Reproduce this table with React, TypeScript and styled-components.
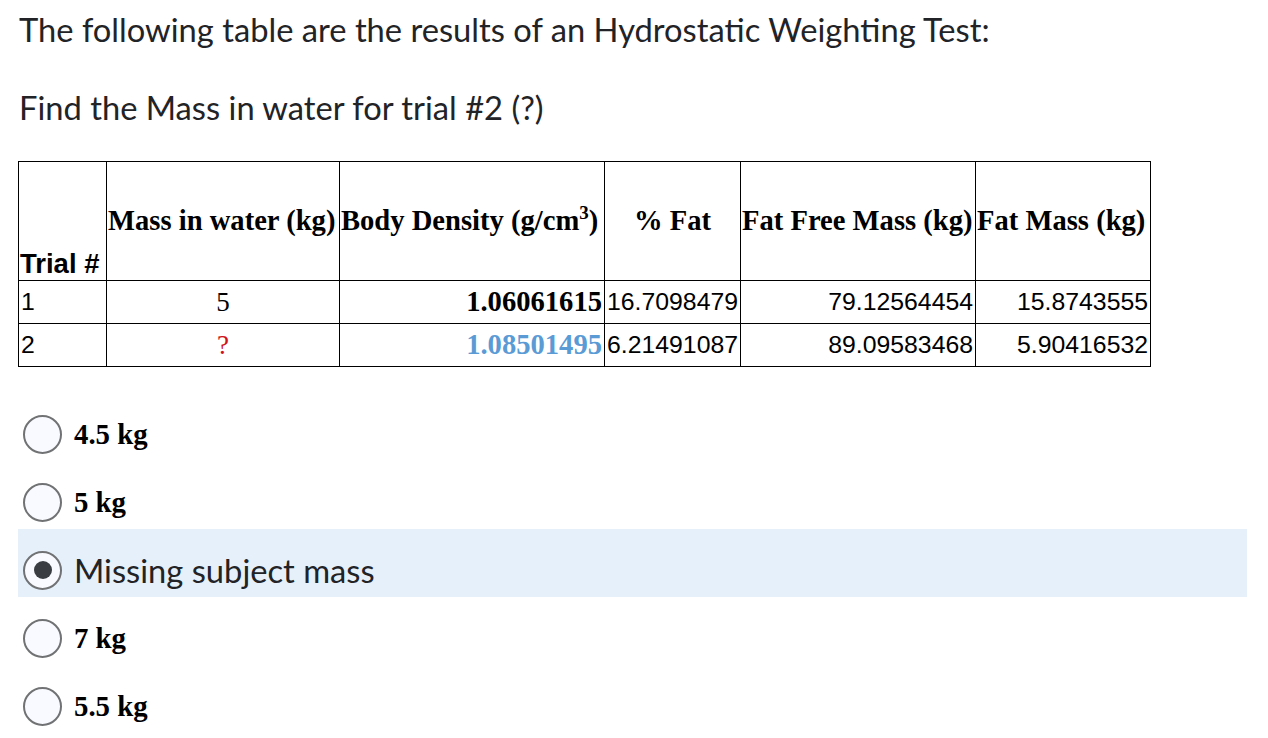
import styled, { createGlobalStyle } from "styled-components"

const GlobalStyle = createGlobalStyle`
    body {
        margin: 0;
        background: #ffffff;
        font-family: Lato, "Open Sans", sans-serif;
        color: #222326;
    }
`

const Page = styled.div`
    padding: 6px 21px 0 18px;
`

const Prompt = styled.p`
    margin: 0 0 0 1px;
    font-size: 32.7px;
    line-height: 48px;
`

const Gap = styled.div`
    height: 30px;
`

const Table = styled.table`
    margin-top: 29px;
    border-collapse: collapse;
    table-layout: fixed;
    color: #000;
`

const HeadCell = styled.td<{ $w: number; $sans?: boolean; $bottom?: boolean; $align?: string }>`
    width: ${p => p.$w}px;
    height: 118px;
    padding: 0 1px;
    border: 1px solid #000;
    font-family: ${p => (p.$sans ? '"Liberation Sans", Arial, sans-serif' : '"Liberation Serif", "Times New Roman", serif')};
    font-weight: bold;
    font-size: ${p => (p.$sans ? 27.5 : 28.6)}px;
    vertical-align: ${p => (p.$bottom ? "bottom" : "middle")};
    text-align: ${p => p.$align || "left"};
    white-space: nowrap;
    overflow: visible;
    sup {
        font-size: 19px;
        line-height: 0;
    }
`

const Cell = styled.td<{ $serif?: boolean; $bold?: boolean; $align?: string; $color?: string }>`
    height: 42px;
    padding: 0 2px;
    border: 1px solid #000;
    font-family: ${p => (p.$serif ? '"Liberation Serif", "Times New Roman", serif' : '"Liberation Sans", Arial, sans-serif')};
    font-weight: ${p => (p.$bold ? "bold" : "normal")};
    font-size: ${p => (p.$serif && p.$bold ? 28.6 : p.$serif ? 27 : 24.8)}px;
    text-align: ${p => p.$align || "left"};
    color: ${p => p.$color || "#000"};
    white-space: nowrap;
    vertical-align: middle;
`

const Options = styled.div`
    margin-top: 26px;
    display: flex;
    flex-direction: column;
`

const Option = styled.label<{ $selected?: boolean }>`
    display: flex;
    align-items: center;
    gap: 12px;
    height: 68px;
    padding: 14px 0 0 5px;
    box-sizing: border-box;
    background: ${p => (p.$selected ? "#e6f0fb" : "transparent")};
`

const Radio = styled.span<{ $checked?: boolean }>`
    width: 39px;
    height: 39px;
    box-sizing: border-box;
    border-radius: 50%;
    border: 2px solid #707274;
    background: #f8faff;
    display: flex;
    align-items: center;
    justify-content: center;
    flex-shrink: 0;
    &::after {
        content: "";
        display: ${p => (p.$checked ? "block" : "none")};
        width: 18px;
        height: 18px;
        border-radius: 50%;
        background: #3a3d42;
    }
`

const AnswerBold = styled.span`
    font-family: "Liberation Serif", "Times New Roman", serif;
    font-weight: bold;
    font-size: 28.8px;
    color: #000;
`

const AnswerText = styled.span`
    font-size: 32.7px;
    color: #222326;
`

type Row = { trial: string; water: string; density: string; fat: string; ffm: string; fm: string; missing?: boolean }

const rows: Row[] = [
    { trial: "1", water: "5", density: "1.06061615", fat: "16.7098479", ffm: "79.12564454", fm: "15.8743555" },
    { trial: "2", water: "?", density: "1.08501495", fat: "6.21491087", ffm: "89.09583468", fm: "5.90416532", missing: true },
]

const answers = [
    { label: "4.5 kg", serif: true },
    { label: "5 kg", serif: true },
    { label: "Missing subject mass", serif: false, selected: true },
    { label: "7 kg", serif: true },
    { label: "5.5 kg", serif: true },
]

export default function App() {
    return (
        <>
            <GlobalStyle />
            <Page>
                <Prompt>The following table are the results of an Hydrostatic Weighting Test:</Prompt>
                <Gap />
                <Prompt>Find the Mass in water for trial #2 (?)</Prompt>
                <Table>
                    <tbody>
                        <tr>
                            <HeadCell $w={85} $sans $bottom>Trial #</HeadCell>
                            <HeadCell $w={230}>Mass in water (kg)</HeadCell>
                            <HeadCell $w={262}>Body Density (g/cm<sup>3</sup>)</HeadCell>
                            <HeadCell $w={129} $align="center">% Fat</HeadCell>
                            <HeadCell $w={232}>Fat Free Mass (kg)</HeadCell>
                            <HeadCell $w={172}>Fat Mass (kg)</HeadCell>
                        </tr>
                        {rows.map(r => (
                            <tr key={r.trial}>
                                <Cell>{r.trial}</Cell>
                                <Cell $serif $align="center" $color={r.missing ? "#d0121b" : undefined}>{r.water}</Cell>
                                <Cell $serif $bold $align="right" $color={r.missing ? "#5b9bd5" : undefined}>{r.density}</Cell>
                                <Cell>{r.fat}</Cell>
                                <Cell $align="right">{r.ffm}</Cell>
                                <Cell $align="right">{r.fm}</Cell>
                            </tr>
                        ))}
                    </tbody>
                </Table>
                <Options>
                    {answers.map(a => (
                        <Option key={a.label} $selected={a.selected}>
                            <Radio $checked={a.selected} />
                            {a.serif ? <AnswerBold>{a.label}</AnswerBold> : <AnswerText>{a.label}</AnswerText>}
                        </Option>
                    ))}
                </Options>
            </Page>
        </>
    )
}
